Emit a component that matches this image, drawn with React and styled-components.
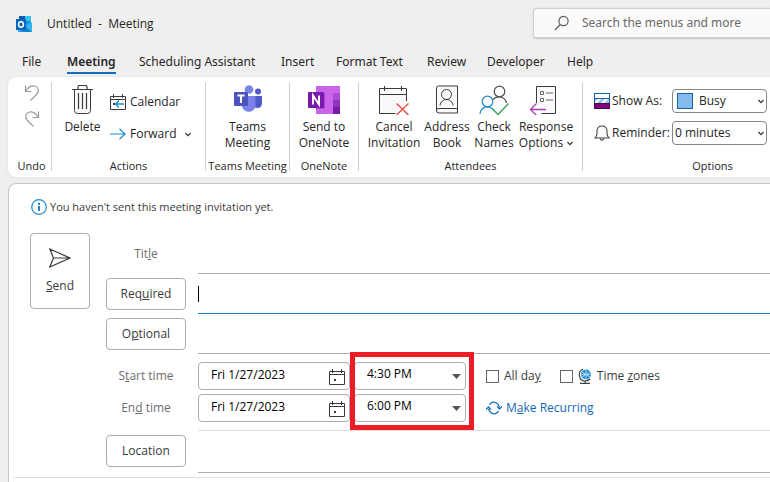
import React from "react";
import styled, { createGlobalStyle } from "styled-components";

const Global = createGlobalStyle`
  * { box-sizing: border-box; }
  body { margin: 0; background: #efefef; }
  body, button, input, select {
    font-family: "Open Sans", "Noto Sans", sans-serif;
    font-size: 12px;
    line-height: 16px;
    color: #262626;
  }
  button, input, select { margin: 0; padding: 0; border: 0; background: none; border-radius: 0; outline: 0; }
  svg { display: block; flex: none; }
`;

const Page = styled.div`
  min-height: 100vh;
  display: flex;
  flex-direction: column;
`;

const TitleBar = styled.header`
  display: flex;
  align-items: flex-start;
  height: 46px;
  padding: 8px 0 0 16px;
`;

const WindowTitle = styled.h1`
  display: flex;
  align-items: center;
  gap: 15px;
  flex: 0 0 517px;
  height: 31px;
  margin: 0;
  font-size: 12px;
  font-weight: 400;
  white-space: pre;
`;

const SearchBox = styled.label`
  flex: 1;
  min-width: 0;
  display: flex;
  align-items: center;
  gap: 12px;
  height: 31px;
  padding-left: 20px;
  border: 1px solid #cfcfcf;
  border-bottom-width: 2px;
  border-right: 0;
  border-radius: 4px 0 0 4px;
  background: #fafafa;
  box-shadow: 0 0 2px #d0d0d0;
`;

const SearchInput = styled.input`
  flex: 1;
  min-width: 0;
  font-family: "Noto Sans", sans-serif;
  &::placeholder { color: #6a6a6a; opacity: 1; }
`;

const Tabs = styled.nav`
  display: grid;
  grid-template-columns: 45px 72px 142px 55px 91px 60px 80px auto;
  justify-items: start;
  height: 31px;
  padding: 6px 0 0 22px;
`;

const Tab = styled.button`
  height: 22px;
  font-family: "Noto Sans", sans-serif;
  line-height: 20px;
  white-space: nowrap;
  border-bottom: 2px solid ${(p) => (p.$active ? "#0f6cbd" : "transparent")};
  font-weight: ${(p) => (p.$active ? 600 : 400)};
`;

const Ribbon = styled.section`
  display: flex;
  height: 100px;
  margin-left: 8px;
  padding: 5px 0 6px;
  background: #fff;
  border-radius: 8px 0 0 8px;
  box-shadow: 0 0 2px #d4d4d4;
`;

const Group = styled.div`
  flex: ${(p) => (p.$width ? `0 0 ${p.$width}px` : "1")};
  display: flex;
  flex-direction: column;
  justify-content: space-between;
  border-right: ${(p) => (p.$width ? "1px solid #cfcfcf" : "0")};
`;

const GroupBody = styled.div`
  display: flex;
  justify-content: ${(p) => p.$justify || "center"};
  gap: ${(p) => p.$gap || 0}px;
  height: 76px;
  padding-left: ${(p) => p.$indent || 0}px;
`;

const GroupLabel = styled.div`
  height: 12px;
  line-height: 14px;
  text-align: center;
  white-space: nowrap;
  font-size: 11px;
  padding-left: ${(p) => p.$indent || 0}px;
`;

const Stack = styled.div`
  display: flex;
  flex-direction: column;
  gap: ${(p) => p.$gap || 0}px;
  padding-top: ${(p) => p.$top || 0}px;
`;

const BigButton = styled.button`
  display: flex;
  flex-direction: column;
  align-items: center;
  gap: 4px;
  width: ${(p) => p.$width}px;
  padding-top: 3px;
  white-space: nowrap;
`;

const Line = styled.span`
  display: flex;
  align-items: center;
  gap: 4px;
`;

const SmallButton = styled.button`
  display: flex;
  align-items: center;
  gap: 4px;
  height: 24px;
  white-space: nowrap;
`;

const MenuArrow = styled.span`
  padding-left: 4px;
`;

const OptionRow = styled.label`
  display: grid;
  grid-template-columns: 16px 58px 95px;
  gap: 2px;
  align-items: center;
  height: 24px;
  white-space: nowrap;
`;

const RibbonSelect = styled.span`
  display: flex;
  align-items: center;
  height: 24px;
  padding: 0 2px;
  border: 1px solid #858585;
  border-radius: 4px;
  background: #fff;
`;

const Swatch = styled.span`
  width: 16px;
  height: 16px;
  margin: 0 6px 0 2px;
  border: 1px solid #1a64b0;
  background: #84bbea;
`;

const PlainSelect = styled.select`
  flex: 1;
  min-width: 0;
  appearance: none;
`;

const Panel = styled.main`
  flex: 1;
  margin: 6px 0 0 8px;
  padding: 14px 0 4px 5px;
  border: 1px solid #c6c6c6;
  border-right: 0;
  border-bottom: 0;
  border-radius: 8px 0 0 0;
  background: #fff;
`;

const Notice = styled.p`
  display: flex;
  align-items: center;
  gap: 3px;
  height: 18px;
  margin: 0 0 17px 17px;
  font-size: 11px;
  color: #3b3b3b;
`;

const Form = styled.form`
  display: flex;
  align-items: flex-start;
  gap: 16px;
  padding: 0 0 4px 16px;
  border-bottom: 1px solid #dedede;
`;

const SendButton = styled.button`
  display: flex;
  flex-direction: column;
  align-items: center;
  justify-content: center;
  gap: 10px;
  flex: 0 0 60px;
  height: 76px;
  border: 1px solid #b0b0b0;
  border-radius: 4px;
  color: #3b3b3b;
`;

const Fields = styled.div`
  flex: 1;
  min-width: 0;
`;

const FieldRow = styled.div`
  display: grid;
  grid-template-columns: 80px 1fr;
  column-gap: 12px;
  align-items: start;
  height: ${(p) => p.$height || 40}px;
`;

const FieldLabel = styled.label`
  height: 28px;
  line-height: 28px;
  margin-top: ${(p) => p.$top || 0}px;
  text-align: center;
  color: #6e6e6e;
  white-space: nowrap;
`;

const FieldButton = styled.button`
  height: 32px;
  margin-top: 4px;
  border: 1px solid #adadad;
  border-radius: 4px;
  color: #3b3b3b;
`;

const FieldValue = styled.div`
  display: flex;
  align-items: center;
  height: 100%;
  border-bottom: 1px solid ${(p) => (p.$focused ? "#1a7ac8" : "#adadad")};
`;

const FieldInput = styled.input`
  flex: 1;
  min-width: 0;
  height: 100%;
`;

const Caret = styled.span`
  width: 1px;
  height: 16px;
  background: #000;
`;

const Schedule = styled.div`
  display: flex;
  height: 76px;
  padding-top: 8px;
`;

const LabelColumn = styled(Stack)`
  width: 80px;
  margin-right: 12px;
`;

const Column = styled(Stack)`
  position: relative;
  flex: 0 0 ${(p) => p.$width}px;
  min-width: 0;
  margin-right: ${(p) => p.$after}px;
`;

const Highlight = styled.div`
  position: absolute;
  inset: -10px -8px 0 -4px;
  border: 5px solid #ee1c24;
  pointer-events: none;
`;

const PickBox = styled.div`
  display: flex;
  align-items: center;
  height: 28px;
  padding: 0 4px 0 12px;
  border: 1px solid #adadad;
  border-radius: 4px;
`;

const PickInput = styled.input`
  flex: 1;
  width: 100%;
  min-width: 0;
  height: 26px;
  padding-bottom: 4px;
  color: #000;
`;

const PickSelect = styled(PlainSelect)`
  height: 26px;
  padding-bottom: 4px;
  color: #000;
`;

const IconButton = styled.button`
  height: 26px;
  padding-top: 2px;
`;

const Checks = styled.div`
  display: flex;
  align-items: center;
  gap: 19px;
  height: 28px;
`;

const Check = styled.label`
  display: flex;
  align-items: center;
  gap: 5px;
  color: #3b3b3b;
  white-space: nowrap;
`;

const CheckBox = styled.input`
  appearance: none;
  width: 13px;
  height: 13px;
  border: 1px solid #666;
  background: #fff;
  &:checked { background: #0f6cbd; }
`;

const RecurringLink = styled.a`
  display: flex;
  align-items: center;
  gap: 4px;
  height: 28px;
  color: #1268b8;
  text-decoration: none;
  white-space: nowrap;
`;

const ScheduleRule = styled.div`
  height: 1px;
  margin-left: 92px;
  background: #dedede;
`;

const OutlookIcon = () => (
  <svg width="16" height="16" viewBox="0 0 16 16">
    <path d="M3 0h12v9H3z" fill="#1490df" />
    <path d="M3 0h6v5H3z" fill="#0a5ca8" />
    <path d="M9 0h6v5H9z" fill="#32c3f4" />
    <path d="M9 5h6v5H9z" fill="#1793e0" />
    <path d="M2 9l14-2v9H2z" fill="#28a8ea" />
    <path d="M16 7v9H3l7-5z" fill="#35b8f1" />
    <path d="M10 11l6 5H4z" fill="#1683d0" />
    <rect y="3" width="10" height="11" fill="#0a67b8" />
    <ellipse cx="5" cy="8.500" rx="2.400" ry="2.700" fill="none" stroke="#fff" strokeWidth="1.500" />
  </svg>
);

const SearchIcon = () => (
  <svg width="16" height="16" viewBox="0 0 16 16" fill="none" stroke="#5c5c5c" strokeWidth="1.200">
    <circle cx="9.500" cy="6" r="4.600" />
    <path d="M6.200 9.500L1 15" />
  </svg>
);

const UndoIcon = () => (
  <svg width="16" height="18" viewBox="0 0 16 18" fill="none" stroke="#9b9b9b" strokeWidth="1.200">
    <path d="M1.500 1.500v6h6M2 7c2-3.500 5-5.500 8.500-5 4 .8 5 5 2.500 8l-6.500 6.500" />
  </svg>
);

const RedoIcon = () => (
  <svg width="16" height="18" viewBox="0 0 16 18" fill="none" stroke="#9b9b9b" strokeWidth="1.200">
    <path d="M14.500 1.500v6h-6M14 7c-2-3.500-5-5.500-8.500-5-4 .8-5 5-2.500 8l6.500 6.500" />
  </svg>
);

const TrashIcon = () => (
  <svg width="22" height="30" viewBox="0 0 22 30" fill="none" stroke="#3b3b3b">
    <path d="M2.500 4.500v21q0 3 3 3h10q3 0 3-3v-21" fill="#fafafa" />
    <path d="M0 4.500h21M6 4v-2q0-1.500 1.500-1.500h6q1.500 0 1.500 1.500v2M6.500 8v16M10.500 8v16M14.500 8v16" strokeWidth="1.200" />
  </svg>
);

const CalendarIcon = () => (
  <svg width="16" height="17" viewBox="0 0 16 17" fill="none" stroke="#3b3b3b">
    <path d="M.5 2.500h15v13H.5zM.5 5.500h15M3.500 0v4M12.500 0v4" />
    <path d="M3 9h2v2H3z" fill="#3b3b3b" stroke="none" />
    <path d="M14 10H6M9 6.500L5.500 10 9 13.500" stroke="#1e88d2" strokeWidth="1.300" />
  </svg>
);

const ForwardIcon = () => (
  <svg width="16" height="12" viewBox="0 0 16 12" fill="none" stroke="#1e88d2" strokeWidth="1.200">
    <path d="M0 6h15M9.500 .7L15 6l-5.500 5.300" />
  </svg>
);

const Chevron = () => (
  <svg width="6" height="5" viewBox="0 0 6 5" fill="none" stroke="#333" strokeWidth="1.200">
    <path d="M.4 1L3 3.600 5.600 1" />
  </svg>
);

const TeamsIcon = () => (
  <svg width="28" height="30" viewBox="0 0 28 30">
    <circle cx="24" cy="6.500" r="3" fill="#5059c9" />
    <path d="M19 11h9v7c0 5-4 6-8 4z" fill="#5059c9" />
    <circle cx="15" cy="4.500" r="4.300" fill="#7b83eb" />
    <path d="M8 11h13.500v9c0 9-13.500 9-13.500 0z" fill="#7b83eb" />
    <rect y="7" width="14" height="14" rx="1" fill="#4b53bc" />
    <path d="M3.500 10.500h7M7 10.500V18" stroke="#fff" strokeWidth="2" />
  </svg>
);

const OneNoteIcon = () => (
  <svg width="32" height="30" viewBox="0 0 32 30">
    <path d="M8 1h24v28H8z" fill="#ca64ea" />
    <path d="M25 8h7v7h-7z" fill="#ae4bd5" />
    <path d="M25 15h7v7h-7z" fill="#9332bf" />
    <path d="M25 22h7v7h-7z" fill="#7719aa" />
    <path d="M8 8h9v16H8z" fill="#a94bc7" />
    <rect y="7" width="16" height="16" rx="1" fill="#7719aa" />
    <path d="M5 19.500v-9l6 9v-9" fill="none" stroke="#fff" strokeWidth="1.900" />
  </svg>
);

const CancelIcon = () => (
  <svg width="32" height="30" viewBox="0 0 32 30" fill="none" stroke="#3b3b3b">
    <path d="M28.500 16V3.500H1.500v25h16" fill="#fafafa" />
    <path d="M1.500 9.500h27M6.500 1v5M23.500 1v5" strokeWidth="1.100" />
    <path d="M18.500 18.500l12 11.500M30.500 18.500L18.500 30" stroke="#ec4b46" strokeWidth="1.400" />
  </svg>
);

const AddressIcon = () => (
  <svg width="22" height="30" viewBox="0 0 22 30" fill="none" stroke="#3b3b3b">
    <path d="M.5 26V3q0-2 2-2h19v27H3q-2.500 0-2.500-2.500T3 23.500h18.500" fill="#fafafa" />
    <circle cx="10.500" cy="9.500" r="5" />
    <path d="M4 20.500c1-8 12-8 13 0" />
  </svg>
);

const NamesIcon = () => (
  <svg width="30" height="30" viewBox="0 0 30 30" fill="none" strokeWidth="1.200">
    <circle cx="20.500" cy="6.500" r="5.300" stroke="#505050" />
    <path d="M14 15c3-5 12-4 13.500 3" stroke="#505050" />
    <circle cx="8.500" cy="16.500" r="5.300" stroke="#1e88d2" />
    <path d="M1 29c1-9 11-9 14-3" stroke="#1e88d2" />
    <path d="M13.500 24l5.500 5.500 10.500-11" stroke="#36a35a" strokeWidth="1.400" />
  </svg>
);

const ResponseIcon = () => (
  <svg width="34" height="30" viewBox="0 0 34 30" fill="none" stroke="#3b3b3b">
    <path d="M7.500 18V1.500h19v27h-14" fill="#fafafa" />
    <path d="M11.500 6.500h3v3h-3zM11.500 13.500h3v3h-3zM17 8h7M17 15h7" stroke="#666" />
    <path d="M17 24.500H2M7.500 18.500L1.500 24.500l6 6" stroke="#a93fb5" strokeWidth="1.300" />
  </svg>
);

const ShowAsIcon = () => (
  <svg width="16" height="16" viewBox="0 0 16 16">
    <rect width="16" height="16" fill="#1464ad" />
    <path d="M1 1h14v4H1z" fill="#fff" />
    <path d="M1 6h14v4H1z" fill="#9cc8ed" />
    <path d="M1 9l3-3h3l-4 4H1zM7 10l4-4h3l-4 4z" fill="#fff" />
    <path d="M0 10h16v6H0z" fill="#4b064e" />
    <path d="M1 11h14v4H1z" fill="#80057f" />
  </svg>
);

const BellIcon = () => (
  <svg width="16" height="16" viewBox="0 0 16 16" fill="#fafafa" stroke="#444" strokeWidth="1.100">
    <path d="M6 13.500q2 3.500 4 0" />
    <path d="M1 13q2-2 2-5V5.500c0-6 10-6 10 0V8q0 3 2 5z" />
  </svg>
);

const InfoIcon = () => (
  <svg width="16" height="16" viewBox="0 0 16 16">
    <circle cx="8" cy="8" r="7.300" fill="none" stroke="#1e88d2" strokeWidth="1.200" />
    <path d="M7 4h2v2H7zM7 7h2v5H7z" fill="#1e88d2" />
  </svg>
);

const SendIcon = () => (
  <svg width="22" height="20" viewBox="0 0 22 20" fill="none" stroke="#3b3b3b" strokeWidth="1.200">
    <path d="M.8 1L21 10 .8 19 4.500 10zM4.500 10H21" />
  </svg>
);

const DateIcon = () => (
  <svg width="16" height="17" viewBox="0 0 16 17" fill="none" stroke="#3b3b3b">
    <path d="M.5 2.500h15v13H.5zM.5 5.500h15M3.500 0v4M12.500 0v4" />
    <path d="M5 10h2v2H5z" fill="#3b3b3b" stroke="none" />
  </svg>
);

const DropArrow = () => (
  <svg width="9" height="5" viewBox="0 0 9 5">
    <path d="M0 0h9L4.500 5z" fill="#555" />
  </svg>
);

const GlobeIcon = () => (
  <svg width="14" height="16" viewBox="0 0 14 16" fill="none">
    <circle cx="8" cy="6.500" r="5" fill="#238bd0" />
    <path d="M4 4l8 5M4 9l8-5M8 2v9M3.500 6.500h9" stroke="#a9d6f2" />
    <path d="M5 1C-1 4 1 13 7 13q3 0 5-2M7 13v2M2 15.300h10" stroke="#404040" strokeWidth="1.200" />
  </svg>
);

const RecurIcon = () => (
  <svg width="16" height="14" viewBox="0 0 16 14" fill="none" stroke="#1b75bd" strokeWidth="1.300">
    <path d="M3.500 4C6-.5 12 .5 13.500 6.500M12.500 10C10 14.500 4 13.500 2.500 7.500" />
    <path d="M0 8.500L2.500 6 5 8.500M11 5.500L13.500 8 16 5.500" />
  </svg>
);

const tabs = ["File", "Meeting", "Scheduling Assistant", "Insert", "Format Text", "Review", "Developer", "Help"];

function DatePick({ id }) {
  return (
    <PickBox>
      <PickInput id={id} defaultValue="Fri 1/27/2023" />
      <IconButton type="button" aria-label="Choose date"><DateIcon /></IconButton>
    </PickBox>
  );
}

function TimePick({ label, value }) {
  return (
    <PickBox>
      <PickSelect aria-label={label} defaultValue={value}>
        <option>{value}</option>
      </PickSelect>
      <DropArrow />
    </PickBox>
  );
}

export default function App() {
  return (
    <Page>
      <Global />
      <TitleBar>
        <WindowTitle><OutlookIcon />{"Untitled  -  Meeting"}</WindowTitle>
        <SearchBox>
          <SearchIcon />
          <SearchInput aria-label="Search" placeholder="Search the menus and more" />
        </SearchBox>
      </TitleBar>
      <Tabs>
        {tabs.map((name) => <Tab key={name} $active={name === "Meeting"}>{name}</Tab>)}
      </Tabs>

      <Ribbon>
        <Group $width={44}>
          <GroupBody $indent={4}>
            <Stack $gap={8} $top={2}>
              <button aria-label="Undo"><UndoIcon /></button>
              <button aria-label="Redo"><RedoIcon /></button>
            </Stack>
          </GroupBody>
          <GroupLabel $indent={4}>Undo</GroupLabel>
        </Group>

        <Group $width={154}>
          <GroupBody $justify="flex-start" $indent={8} $gap={5}>
            <BigButton $width={45}><TrashIcon /><span>Delete</span></BigButton>
            <Stack $gap={8} $top={8}>
              <SmallButton><CalendarIcon />Calendar</SmallButton>
              <SmallButton><ForwardIcon />Forward<MenuArrow><Chevron /></MenuArrow></SmallButton>
            </Stack>
          </GroupBody>
          <GroupLabel>Actions</GroupLabel>
        </Group>

        <Group $width={84}>
          <GroupBody>
            <BigButton $width={76}><TeamsIcon /><span>Teams<br />Meeting</span></BigButton>
          </GroupBody>
          <GroupLabel>Teams Meeting</GroupLabel>
        </Group>

        <Group $width={69}>
          <GroupBody>
            <BigButton $width={64}><OneNoteIcon /><span>Send to<br />OneNote</span></BigButton>
          </GroupBody>
          <GroupLabel>OneNote</GroupLabel>
        </Group>

        <Group $width={224}>
          <GroupBody $justify="flex-start" $indent={6}>
            <BigButton $width={58}><CancelIcon /><span>Cancel<br />Invitation</span></BigButton>
            <BigButton $width={48}><AddressIcon /><span>Address<br />Book</span></BigButton>
            <BigButton $width={46}><NamesIcon /><span>Check<br />Names</span></BigButton>
            <BigButton $width={58}>
              <ResponseIcon />
              <span>Response<Line>Options<Chevron /></Line></span>
            </BigButton>
          </GroupBody>
          <GroupLabel>Attendees</GroupLabel>
        </Group>

        <Group>
          <GroupBody $justify="flex-start" $indent={11}>
            <Stack $gap={8} $top={7}>
              <OptionRow>
                <ShowAsIcon />Show As:
                <RibbonSelect>
                  <Swatch />
                  <PlainSelect defaultValue="Busy"><option>Busy</option></PlainSelect>
                  <Chevron />
                </RibbonSelect>
              </OptionRow>
              <OptionRow>
                <BellIcon />Reminder:
                <RibbonSelect>
                  <PlainSelect defaultValue="0 minutes"><option>0 minutes</option></PlainSelect>
                  <Chevron />
                </RibbonSelect>
              </OptionRow>
            </Stack>
          </GroupBody>
          <GroupLabel $indent={72}>Options</GroupLabel>
        </Group>
      </Ribbon>

      <Panel>
        <Notice><InfoIcon />You haven't sent this meeting invitation yet.</Notice>
        <Form onSubmit={(e) => e.preventDefault()}>
          <SendButton type="submit"><SendIcon /><span><u>S</u>end</span></SendButton>
          <Fields>
            <FieldRow $height={41}>
              <FieldLabel htmlFor="title" $top={7}>Tit<u>l</u>e</FieldLabel>
              <FieldValue><FieldInput id="title" /></FieldValue>
            </FieldRow>
            <FieldRow>
              <FieldButton type="button">Req<u>u</u>ired</FieldButton>
              <FieldValue $focused><Caret /><FieldInput aria-label="Required" /></FieldValue>
            </FieldRow>
            <FieldRow>
              <FieldButton type="button">O<u>p</u>tional</FieldButton>
              <FieldValue><FieldInput aria-label="Optional" /></FieldValue>
            </FieldRow>
            <Schedule>
              <LabelColumn $gap={4}>
                <FieldLabel htmlFor="start">S<u>t</u>art time</FieldLabel>
                <FieldLabel htmlFor="end">En<u>d</u> time</FieldLabel>
              </LabelColumn>
              <Column $width={152} $after={4} $gap={4}>
                <DatePick id="start" />
                <DatePick id="end" />
              </Column>
              <Column $width={112} $after={20} $gap={4}>
                <TimePick label="Start time of day" value="4:30 PM" />
                <TimePick label="End time of day" value="6:00 PM" />
                <Highlight />
              </Column>
              <Stack $gap={4}>
                <Checks>
                  <Check><CheckBox type="checkbox" /><span>All da<u>y</u></span></Check>
                  <Check><CheckBox type="checkbox" /><GlobeIcon /><span>Time <u>z</u>ones</span></Check>
                </Checks>
                <RecurringLink href="#recurring"><RecurIcon /><span>M<u>a</u>ke Recurring</span></RecurringLink>
              </Stack>
            </Schedule>
            <ScheduleRule />
            <FieldRow $height={42}>
              <FieldButton type="button">Location</FieldButton>
              <FieldValue><FieldInput aria-label="Location" /></FieldValue>
            </FieldRow>
          </Fields>
        </Form>
      </Panel>
    </Page>
  );
}
